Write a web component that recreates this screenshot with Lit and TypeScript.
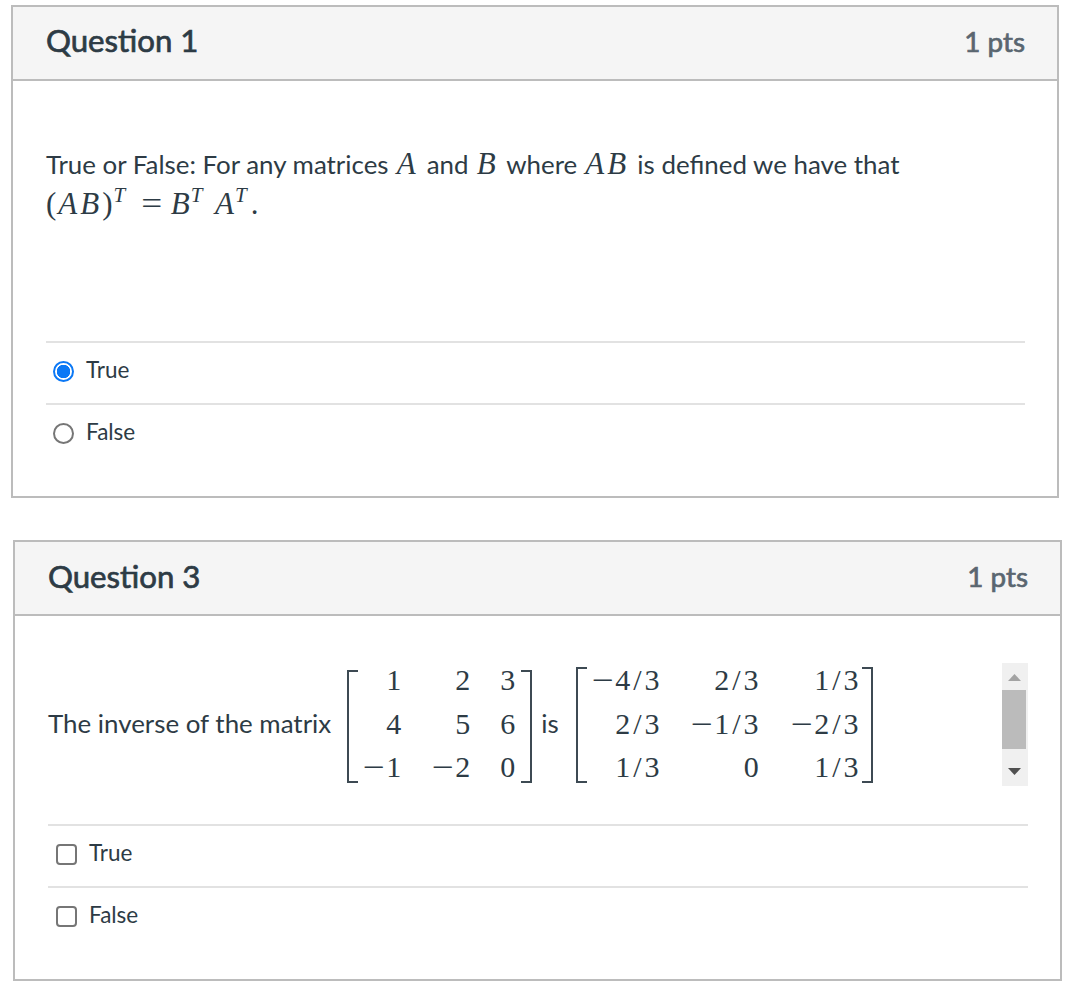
import { css, html, LitElement } from "lit";
import { customElement } from "lit/decorators.js";

const firstMatrix = [
  ["1", "2", "3"],
  ["4", "5", "6"],
  ["−1", "−2", "0"],
];

const secondMatrix = [
  ["−4/3", "2/3", "1/3"],
  ["2/3", "−1/3", "−2/3"],
  ["1/3", "0", "1/3"],
];

@customElement("app-root")
export class AppRoot extends LitElement {
  static styles = css`
    :host {
      display: block;
      width: 1079px;
      height: 1002px;
      padding-top: 5px;
      box-sizing: border-box;
      background: #fff;
      color: #2d3b45;
      font-family: Lato, "Liberation Sans", sans-serif;
      overflow: hidden;
    }
    .card {
      box-sizing: border-box;
      border: 2px solid #bcbcbc;
    }
    .card-one {
      margin-left: 11px;
      width: 1048px;
      height: 493px;
    }
    .card-two {
      margin-left: 13px;
      margin-top: 42px;
      width: 1049px;
      height: 441px;
    }
    .card-two .title {
      margin-top: 2px;
    }
    .header {
      display: flex;
      justify-content: space-between;
      align-items: center;
      height: 74px;
      box-sizing: border-box;
      padding: 0 32px 6px 33px;
      background: #f5f5f5;
      border-bottom: 2px solid #bcbcbc;
    }
    .title {
      font-size: 31.2px;
      font-weight: 400;
      -webkit-text-stroke: 0.7px #2d3b45;
    }
    .points {
      font-size: 27.8px;
      font-weight: 400;
      color: #5a6670;
      -webkit-text-stroke: 0.7px #5a6670;
      margin-top: 2px;
    }
    .body {
      padding: 0 32px 0 33px;
    }
    .question {
      font-size: 25.9px;
      line-height: 40px;
      height: 260px;
      box-sizing: border-box;
      padding-top: 63px;
    }
    .math {
      font-family: "Liberation Serif", serif;
      font-size: 31px;
      line-height: 1;
      margin: 0 1.5px;
    }
    .math i {
      letter-spacing: 3px;
    }
    .math sup {
      font-size: 21px;
      font-style: italic;
      line-height: 0;
      vertical-align: 12px;
      margin-left: -2px;
    }
    .math .after-paren {
      margin-left: 1px;
    }
    .math.equation {
      display: inline-block;
      margin: 1px 0 0;
    }
    .open-paren {
      margin-right: 2px;
    }
    .equals {
      display: inline-block;
      margin: 0 10px 0 18px;
      transform: scaleX(1.2);
    }
    .second-factor {
      margin-left: 5px;
    }
    .period {
      margin-left: 4px;
    }
    .matrix-row {
      display: flex;
      justify-content: space-between;
      height: 208px;
      box-sizing: border-box;
      padding-top: 47px;
    }
    .matrix-line {
      display: flex;
      align-items: center;
      height: 123px;
      font-size: 25.9px;
    }
    .matrix-line > span {
      margin-bottom: 4px;
    }
    .matrix-line > .is {
      margin: 0 17px 4px 9px;
    }
    .matrix {
      display: grid;
      grid-auto-rows: 43.5px;
      align-items: center;
      justify-items: end;
      height: 116px;
      align-content: center;
      position: relative;
      font-family: "Liberation Serif", serif;
      font-size: 30px;
      letter-spacing: 3px;
    }
    .matrix .cell {
      margin-bottom: 2px;
    }
    .minus {
      display: inline-block;
      letter-spacing: 0;
      margin: 0 1px 0 5px;
      transform: scaleX(1.3);
      transform-origin: right center;
    }
    .matrix-a {
      grid-template-columns: 57px 69px 45px;
      padding-right: 14px;
      margin-left: 16px;
    }
    .matrix-b {
      grid-template-columns: 87px 99px 100px;
      padding-right: 11px;
    }
    .matrix::before,
    .matrix::after {
      content: "";
      position: absolute;
      top: 0;
      bottom: 0;
      width: 9px;
      border: 2px solid #3d4a53;
    }
    .matrix-a::before,
    .matrix-a::after {
      top: 3px;
    }
    .matrix::before {
      left: 0;
      border-right: none;
    }
    .matrix::after {
      right: 0;
      border-left: none;
    }
    .scrollbar {
      display: flex;
      flex-direction: column;
      align-items: flex-start;
      width: 26px;
      height: 123px;
      background: #f0f0f0;
    }
    .arrow {
      width: 26px;
      height: 27px;
      display: block;
    }
    .arrow-down {
      margin-top: 10px;
    }
    .thumb {
      width: 24px;
      height: 59px;
      background: #bbbbbb;
    }
    .choice {
      display: flex;
      align-items: center;
      height: 62px;
      box-sizing: border-box;
      border-top: 2px solid #e2e2e2;
      font-size: 22.5px;
      padding-left: 7px;
    }
    .choice label {
      margin-left: 12px;
      position: relative;
      top: -4px;
    }
    input {
      appearance: none;
      -webkit-appearance: none;
      margin: 0 0 3px;
      width: 21px;
      height: 21px;
      box-sizing: border-box;
      border: 2px solid #767676;
      background: #fff;
      flex: none;
    }
    input[type="radio"] {
      border-radius: 50%;
    }
    input[type="radio"]:checked {
      border: 2px solid #0b78f5;
      background: radial-gradient(circle, #0b78f5 0 6.5px, #fff 7px);
    }
    input[type="checkbox"] {
      margin-left: 1px;
      border-radius: 4px;
    }
  `;

  renderCell(cell: string) {
    if (cell.startsWith("−")) {
      return html`<span class="cell"><span class="minus">−</span>${cell.slice(1)}</span>`;
    }
    return html`<span class="cell">${cell}</span>`;
  }

  renderMatrix(rows: string[][], cls: string) {
    return html`<div class="matrix ${cls}">
      ${rows.flat().map((cell) => this.renderCell(cell))}
    </div>`;
  }

  renderChoice(type: string, name: string, text: string, checked = false) {
    return html`<div class="choice">
      <input type=${type} name=${name} .checked=${checked} />
      <label>${text}</label>
    </div>`;
  }

  render() {
    return html`
      <section class="card card-one">
        <div class="header">
          <span class="title">Question 1</span>
          <span class="points">1 pts</span>
        </div>
        <div class="body">
          <div class="question">
            True or False: For any matrices <span class="math"><i>A</i></span> and
            <span class="math"><i>B</i></span> where <span class="math"><i>AB</i></span> is
            defined we have that<br />
            <span class="math equation">
              <span class="open-paren">(</span><i>AB</i>)<sup class="after-paren">T</sup><span class="equals">=</span><i>B</i><sup>T</sup>
              <i class="second-factor">A</i><sup>T</sup><span class="period">.</span>
            </span>
          </div>
          ${this.renderChoice("radio", "q1", "True", true)}
          ${this.renderChoice("radio", "q1", "False")}
        </div>
      </section>

      <section class="card card-two">
        <div class="header">
          <span class="title">Question 3</span>
          <span class="points">1 pts</span>
        </div>
        <div class="body">
          <div class="matrix-row">
            <div class="matrix-line">
              <span>The inverse of the matrix</span>
              ${this.renderMatrix(firstMatrix, "matrix-a")}
              <span class="is">is</span>
              ${this.renderMatrix(secondMatrix, "matrix-b")}
            </div>
            <div class="scrollbar">
              <svg class="arrow" viewBox="0 0 26 27">
                <path d="M12.500 11l6.500 7h-13z" fill="#a3a3a3" />
              </svg>
              <div class="thumb"></div>
              <svg class="arrow arrow-down" viewBox="0 0 26 27">
                <path d="M6 9h13l-6.500 7z" fill="#505050" />
              </svg>
            </div>
          </div>
          ${this.renderChoice("checkbox", "q3", "True")}
          ${this.renderChoice("checkbox", "q3", "False")}
        </div>
      </section>
    `;
  }
}
